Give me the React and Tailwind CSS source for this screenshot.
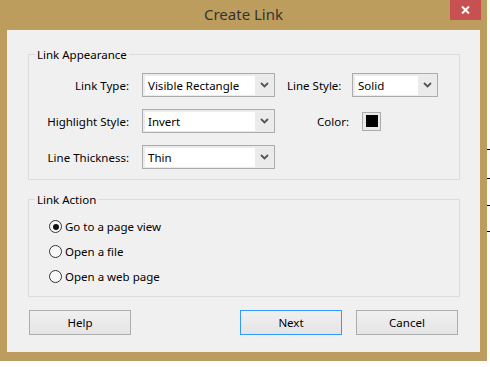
import React from "react";

function Chevron() {
  return (
    <svg width="9" height="6" viewBox="0 0 9 6" className="block">
      <path d="M1 1 L4.5 4.5 L8 1" stroke="#555" strokeWidth="1.8" fill="none" />
    </svg>
  );
}

function Select({ value, w, white }) {
  return (
    <div className={`h-[24px] ${w} border border-[#acacac] bg-[#ebebeb] flex items-center pl-[2px]`}>
      <div className={`h-[19px] ${white} bg-white flex items-center pl-[3px] text-black whitespace-nowrap`}>{value}</div>
      <div className="flex-1 flex justify-center">
        <Chevron />
      </div>
    </div>
  );
}

function Radio({ checked, label }) {
  return (
    <div className="h-[25px] flex items-center">
      <div className="w-[13px] h-[13px] rounded-full border border-[#333] bg-[#f8f8f8] flex items-center justify-center">
        {checked && <div className="w-[6px] h-[6px] rounded-full bg-[#111]" />}
      </div>
      <span className="ml-[3px]">{label}</span>
    </div>
  );
}

function Button({ children, focus }) {
  return (
    <div
      className={`w-[102px] h-[25px] border ${focus ? "border-[#3399ff]" : "border-[#adadad]"} bg-gradient-to-b from-[#f0f0f0] to-[#e5e5e5] flex items-center justify-center text-black`}
    >
      {children}
    </div>
  );
}

export default function App() {
  return (
    <div className="w-[490px] h-[367px] bg-white relative overflow-hidden font-['Segoe_UI','Noto_Sans',sans-serif] text-[11.5px] leading-[15px] text-black">
      <div className="w-[487px] h-[361px] bg-[#bd9d5d] flex flex-col">
        <div className="h-[30px] flex items-start">
          <div className="w-[37px]" />
          <div className="flex-1 text-center text-[15px] leading-[20px] pt-[4px] text-[#333]">Create Link</div>
          <div className="w-[31px] h-[20px] bg-[#c75050] flex items-center justify-center mr-[6px]">
            <svg width="9" height="8" viewBox="0 0 9 8">
              <path d="M1 0.5 L8 7.5 M8 0.5 L1 7.5" stroke="#fff" strokeWidth="2" />
            </svg>
          </div>
        </div>
        <div className="mx-[7px] h-[322px] bg-[#f0f0f0] pt-[17px] pl-[21px]">
          <fieldset className="w-[432px] border border-[#dcdcdc] pt-[11px] pb-[10px] flex flex-col gap-[12px]">
            <legend className="ml-[6px] px-[2px] leading-[15px]">Link Appearance</legend>
            <div className="flex items-center">
              <div className="w-[100px] text-right">Link Type:</div>
              <div className="ml-[13px]">
                <Select value="Visible Rectangle" w="w-[133px]" white="w-[110px]" />
              </div>
              <div className="w-[77px] pl-[12px]">Line Style:</div>
              <Select value="Solid" w="w-[86px]" white="w-[63px]" />
            </div>
            <div className="flex items-center">
              <div className="w-[100px] text-right">Highlight Style:</div>
              <div className="ml-[13px]">
                <Select value="Invert" w="w-[133px]" white="w-[110px]" />
              </div>
              <div className="w-[74px] text-right">Color:</div>
              <div className="ml-[13px] w-[19px] h-[19px] border border-[#acacac] bg-[#e9e9e9] flex items-center justify-center">
                <div className="w-[12px] h-[12px] bg-black" />
              </div>
            </div>
            <div className="flex items-center">
              <div className="w-[100px] text-right">Line Thickness:</div>
              <div className="ml-[13px]">
                <Select value="Thin" w="w-[133px]" white="w-[110px]" />
              </div>
            </div>
          </fieldset>
          <fieldset className="mt-[12px] w-[432px] border border-[#dcdcdc] pt-[7px] pb-[7px] pl-[20px] flex flex-col">
            <legend className="ml-[-14px] px-[2px] leading-[15px]">Link Action</legend>
            <Radio checked label="Go to a page view" />
            <Radio label="Open a file" />
            <Radio label="Open a web page" />
          </fieldset>
          <div className="mt-[13px] ml-[1px] flex">
            <Button>Help</Button>
            <div className="ml-[109px]">
              <Button focus>Next</Button>
            </div>
            <div className="ml-[14px]">
              <Button>Cancel</Button>
            </div>
          </div>
        </div>
      </div>
      <div className="absolute left-[487px] top-[149px] w-[3px] h-px bg-black" />
      <div className="absolute left-[487px] top-[178px] w-[3px] h-px bg-black" />
      <div className="absolute left-[487px] top-[205px] w-[3px] h-px bg-black" />
      <div className="absolute left-[487px] top-[231px] w-[3px] h-px bg-black" />
    </div>
  );
}
